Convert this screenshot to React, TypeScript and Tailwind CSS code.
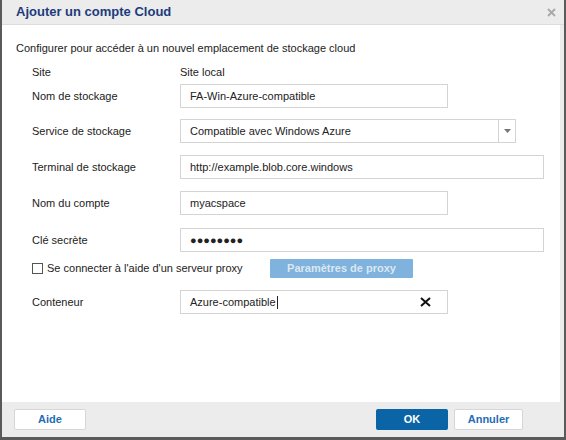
import { useState } from 'react'

const font = { fontFamily: '"Liberation Sans", Arial, sans-serif' }

function Field({ label, children, className = '' }: { label: string; children: React.ReactNode; className?: string }) {
  return (
    <div className={`flex h-[24px] items-center ${className}`}>
      <div className="w-[164px] shrink-0 pl-[16px] text-[11px] text-[#222]">{label}</div>
      {children}
    </div>
  )
}

function TextBox({ value, width }: { value: string; width: string }) {
  return (
    <div className={`flex h-[24px] items-center border border-[#d4d4d4] bg-white pl-[9px] text-[11px] text-[#222] ${width}`}>
      {value}
    </div>
  )
}

export default function App() {
  const [proxy, setProxy] = useState(false)

  return (
    <div
      className="flex h-[440px] w-[566px] flex-col border-b-[3px] border-l-[2px] border-r-[2px] border-[#5a5a5a] bg-[#ececec]"
      style={font}
    >
      <div className="flex h-[25px] items-center justify-between border-b border-[#dcdcdc] pl-[14px] pr-[8px]">
        <span className="text-[13px] font-bold text-[#1d3b7c]">Ajouter un compte Cloud</span>
        <svg width="9" height="9" viewBox="0 0 9 9" className="mt-[1px]">
          <path d="M1 1 L8 8 M8 1 L1 8" stroke="#a8a8a8" strokeWidth="1.8" />
        </svg>
      </div>

      <div className="mr-[4px] flex flex-1 flex-col bg-white pl-[14px] pt-[16px]">
        <div className="h-[14px] text-[11px] leading-[14px] text-[#222]">
          Configurer pour accéder à un nouvel emplacement de stockage cloud
        </div>

        <div className="mt-[10px] flex h-[14px] items-center text-[11px] text-[#222]">
          <div className="w-[164px] pl-[16px]">Site</div>
          <div>Site local</div>
        </div>

        <Field label="Nom de stockage" className="mt-[5px]">
          <TextBox value="FA-Win-Azure-compatible" width="w-[268px]" />
        </Field>

        <Field label="Service de stockage" className="mt-[11px]">
          <div className="flex h-[24px] w-[336px] border border-[#d4d4d4] bg-white text-[11px] text-[#222]">
            <div className="flex flex-1 items-center pl-[9px]">Compatible avec Windows Azure</div>
            <div className="flex w-[17px] items-center justify-center border-l border-[#d4d4d4]">
              <svg width="7" height="4" viewBox="0 0 7 4">
                <path d="M0 0 H7 L3.5 4 Z" fill="#777" />
              </svg>
            </div>
          </div>
        </Field>

        <Field label="Terminal de stockage" className="mt-[12px]">
          <TextBox value="http://example.blob.core.windows" width="w-[364px]" />
        </Field>

        <Field label="Nom du compte" className="mt-[12px]">
          <TextBox value="myacspace" width="w-[268px]" />
        </Field>

        <Field label="Clé secrète" className="mt-[13px]">
          <TextBox value="●●●●●●●●" width="w-[364px] tracking-[0px] text-[10px]" />
        </Field>

        <div className="mt-[7px] flex h-[19px] items-center">
          <label className="flex w-[254px] cursor-pointer items-center pl-[16px] text-[11px] text-[#222]">
            <input
              type="checkbox"
              checked={proxy}
              onChange={(e) => setProxy(e.target.checked)}
              className="mr-[4px] h-[11px] w-[11px] appearance-none border border-[#555] bg-white"
            />
            Se connecter à l'aide d'un serveur proxy
          </label>
          <button className="h-[19px] w-[143px] rounded-[1px] bg-[#7fb2dc] text-[11px] font-bold text-[#dbe8f4]">
            Paramètres de proxy
          </button>
        </div>

        <Field label="Conteneur" className="mt-[12px]">
          <div className="flex h-[24px] w-[268px] items-center border border-[#d4d4d4] bg-white pl-[9px] pr-[16px] text-[11px] text-[#222]">
            <span>Azure-compatible</span>
            <span className="ml-[1px] h-[13px] w-[1px] bg-[#222]" />
            <svg width="11" height="10" viewBox="0 0 11 10" className="ml-auto">
              <path d="M1 1 L10 9 M10 1 L1 9" stroke="#111" strokeWidth="2" />
            </svg>
          </div>
        </Field>
      </div>

      <div className="flex h-[35px] items-center pl-[12px] pr-[41px]">
        <button className="h-[21px] w-[72px] rounded-[2px] border border-[#d6d6d6] bg-white text-[11px] font-bold text-[#1f6db5]">
          Aide
        </button>
        <button className="ml-auto h-[21px] w-[72px] rounded-[2px] bg-[#0b64a6] text-[11px] font-bold text-white">
          OK
        </button>
        <button className="ml-[6px] h-[21px] w-[69px] rounded-[2px] border border-[#d6d6d6] bg-white text-[11px] font-bold text-[#1f6db5]">
          Annuler
        </button>
      </div>
    </div>
  )
}
